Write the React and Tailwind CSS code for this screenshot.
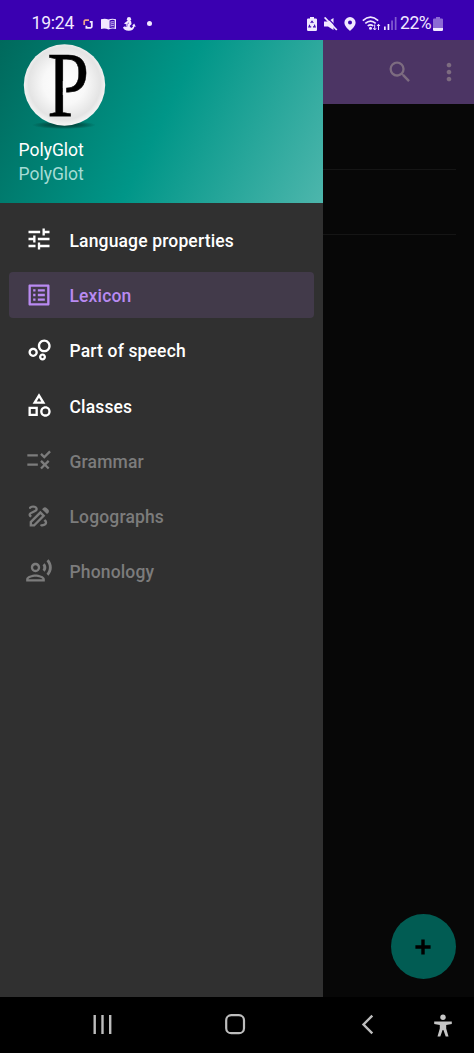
import {
  MdTune,
  MdOutlineListAlt,
  MdOutlineBubbleChart,
  MdOutlineCategory,
  MdRule,
  MdOutlineDraw,
  MdOutlineRecordVoiceOver,
  MdSearch,
  MdMoreVert,
} from "react-icons/md";

const MENU = [
  { label: "Language properties", icon: MdTune },
  { label: "Lexicon", icon: MdOutlineListAlt, active: true },
  { label: "Part of speech", icon: MdOutlineBubbleChart },
  { label: "Classes", icon: MdOutlineCategory },
  { label: "Grammar", icon: MdRule, disabled: true },
  { label: "Logographs", icon: MdOutlineDraw, disabled: true },
  { label: "Phonology", icon: MdOutlineRecordVoiceOver, disabled: true },
];

const StatusBar = () => (
  <header className="h-10 shrink-0 bg-[#3a00b1] text-[#f1e8ff] flex items-center justify-between pt-[7px] pl-[31.5px] pr-[31px]">
    <div className="flex items-center">
      <span className="text-[17.5px] leading-none w-[43px] whitespace-nowrap tracking-[-0.2px]">19:24</span>
      <svg className="ml-[8.5px]" width="10" height="10" viewBox="0 0 10 10" fill="none">
        <path d="M1.2 6V2.4Q1.2 1.2 2.4 1.2H6" stroke="#f0a58c" strokeWidth="1.7" />
        <path d="M6.8 2.8H8.8V7.6Q8.8 8.8 7.6 8.8H3.4V6.8" stroke="#f1e8ff" strokeWidth="1.8" />
      </svg>
      <svg className="ml-[8px]" width="15" height="12" viewBox="0 0 15 12">
        <path d="M0 1.2Q4 0 7.5 1.4Q11 0 15 1.2V11Q11 10 7.5 11.6Q4 10 0 11z" fill="#f1e8ff" />
        <path d="M8.6 2.4Q11 1.5 13.6 2.1V9.8Q11 9.3 8.6 10.1z" fill="#3a00b1" />
        <path d="M9.3 4.2q2-.6 3.6-.3M9.3 6.1q2-.6 3.6-.3M9.3 8q2-.6 3.6-.3" stroke="#f1e8ff" strokeWidth=".9" fill="none" />
      </svg>
      <svg className="ml-[7px]" width="13" height="14" viewBox="0 0 13 14" fill="#f1e8ff">
        <circle cx="6" cy="2.2" r="2.1" />
        <path d="M4.2 4L1 6.6l2.6.8-.6 1.4L0 10.3Q.8 13.6 5.6 13.7q5 .1 5.9-4.2l1.3.2-1.6-3.1-2.1 2.2 1 .3q-.5 1.6-2 1.8L6.6 9l2-2-.6-3z" />
        <path d="M2 9.6l2.6-.8M5.9 5.8L4.2 7.4" stroke="#3a00b1" strokeWidth=".7" />
      </svg>
      <span className="ml-[10.5px] size-[5px] rounded-full bg-[#f1e8ff]" />
    </div>

    <div className="flex items-center">
      <svg width="10" height="14" viewBox="0 0 10 14">
        <path d="M3 0h4v1.4h1.8Q10 1.4 10 2.6v10.2Q10 14 8.8 14H1.2Q0 14 0 12.8V2.6Q0 1.4 1.2 1.4H3z" fill="#f1e8ff" />
        <path d="M3.7 6L5 4.2 6.3 6M7.3 7.6l.9 2.3H6M4.2 9.9H1.9l.9-2.2" stroke="#3a00b1" strokeWidth="1.1" fill="none" />
      </svg>
      <svg className="ml-[7px]" width="14" height="14" viewBox="0 0 14 14">
        <path d="M0 4.6h4L9.5 1v12L4 9.4H0z" fill="#f1e8ff" />
        <path d="M1.8-1L14 11.5" stroke="#3a00b1" strokeWidth="1.2" />
        <path d="M.6.4L12.8 13" stroke="#f1e8ff" strokeWidth="1.7" />
      </svg>
      <svg className="ml-[6px]" width="12" height="14" viewBox="0 0 12 14">
        <path
          d="M6 0a5.6 5.6 0 0 0-5.6 5.6C.4 9 3.6 11.8 6 14c2.4-2.2 5.6-5 5.6-8.4A5.6 5.6 0 0 0 6 0zm0 3.6a2 2 0 1 1 0 4 2 2 0 0 1 0-4z"
          fill="#f1e8ff"
          fillRule="evenodd"
        />
      </svg>
      <svg className="ml-[6.5px]" width="19" height="15" viewBox="0 0 19 15" fill="none" stroke="#f1e8ff" strokeWidth="1.6">
        <path d="M.8 4.6Q8.5-2.2 16.2 4.6M3.3 7.4q5.2-4.7 10.4 0M5.7 10q2.8-2.4 5.6 0" />
        <circle cx="8.5" cy="12.2" r="1.5" fill="#f1e8ff" stroke="none" />
        <path d="M12.7 8.5v5.3M11.2 12.2l1.5 1.8 1.5-1.8M16.5 14V8.3M15 10l1.5-1.8L18 10" strokeWidth="1" />
      </svg>
      <svg className="ml-[3px]" width="13" height="13" viewBox="0 0 13 13" fill="#f1e8ff">
        <path d="M0 9.5h1.7V13H0zM3.6 7h1.7v6H3.6z" />
        <path d="M7.2 3.5h1.7V13H7.2zM10.8 0h1.7v13h-1.7z" opacity=".4" />
      </svg>
      <span className="ml-[3px] w-[32px] text-[17.5px] leading-none whitespace-nowrap tracking-[-0.4px]">22%</span>
      <svg className="ml-[1px]" width="10" height="14" viewBox="0 0 10 14" fill="#f1e8ff">
        <path d="M3 0h4v1.4h1.8Q10 1.4 10 2.6V11H0V2.6Q0 1.4 1.2 1.4H3z" opacity=".45" />
        <path d="M0 11h10v1.8Q10 14 8.8 14H1.2Q0 14 0 12.8z" />
      </svg>
    </div>
  </header>
);

const Logo = () => (
  <svg className="overflow-visible" width="90" height="88" viewBox="0 0 90 88">
    <defs>
      <radialGradient id="ball" cx="50%" cy="48%" r="52%">
        <stop offset="0" stopColor="#ffffff" />
        <stop offset=".5" stopColor="#f8f8f8" />
        <stop offset=".85" stopColor="#e4e4e4" />
        <stop offset="1" stopColor="#f6f6f6" />
      </radialGradient>
      <radialGradient id="shadow">
        <stop offset="0" stopColor="#00251f" stopOpacity=".8" />
        <stop offset=".6" stopColor="#00251f" stopOpacity=".4" />
        <stop offset="1" stopColor="#00251f" stopOpacity="0" />
      </radialGradient>
    </defs>
    <ellipse cx="45" cy="82" rx="32" ry="4" fill="url(#shadow)" />
    <circle cx="45.5" cy="42" r="40.7" fill="url(#ball)" />
    <text
      transform="translate(28.2 73.3) scale(.8 1)"
      fontSize="94"
      fontFamily="'Liberation Serif', serif"
      fill="#000"
      stroke="#000"
      strokeWidth=".6"
    >
      P
    </text>
    {/* gap between the stem and the bowl */}
    <path d="M43.8 38h3.4v14h-3.4z" fill="#fbfbfb" />
  </svg>
);

const MenuItem = ({ label, icon: Icon, active, disabled }) => {
  let color = "text-white";
  if (active) color = "text-[#b98af2]";
  if (disabled) color = "text-[#7c7c7c]";

  return (
    <li
      className={`h-[46px] rounded-[4px] flex items-center pl-[16px] ${color} ${
        active ? "bg-[#423a4a]" : ""
      }`}
    >
      <Icon className="size-[28px] -mt-[1.5px] shrink-0" />
      <span className="ml-[16.5px] pt-[3px] text-[17.5px] leading-none font-medium tracking-[0.15px] whitespace-nowrap">
        {label}
      </span>
    </li>
  );
};

const Drawer = () => (
  <aside className="w-[322.5px] shrink-0 bg-[#303030]">
    <div className="h-[163px] pt-[3px] pl-[18.5px] bg-[linear-gradient(116.7deg,#00695c_0%,#009688_50%,#4db6ac_100%)]">
      <Logo />
      <p className="mt-[7px] text-[17.5px] leading-[24px] text-white">PolyGlot</p>
      <p className="text-[17.5px] leading-[24px] text-[#a5dcd5]">PolyGlot</p>
    </div>
    <ul className="pt-[14px] px-[9px] flex flex-col gap-[9.25px]">
      {MENU.map((item) => (
        <MenuItem key={item.label} {...item} />
      ))}
    </ul>
  </aside>
);

const NavBar = () => (
  <nav className="h-[56px] shrink-0 bg-black">
    <svg width="474" height="56" viewBox="0 0 474 56" fill="none" stroke="#bdbdbd" strokeWidth="2.4">
      <path d="M94.7 18v19M102.5 18v19M110.2 18v19" />
      <rect x="226.2" y="18.2" width="17.8" height="18" rx="5" strokeWidth="2.2" />
      <path d="M372.3 18.7l-8.8 8.8 8.8 8.8" />
      <g fill="#c6c6c6" stroke="none">
        <circle cx="443" cy="20.3" r="2.7" />
        <path d="M434.2 24.5h17.6v2.6l-5.6 1v3.3l2.3 8.1h-2.8L443.4 33h-.8l-2.3 6.5h-2.8l2.3-8.1v-3.3l-5.6-1z" />
      </g>
    </svg>
  </nav>
);

export default function App() {
  return (
    <div className="w-[474px] h-[1053px] flex flex-col overflow-hidden bg-black font-['Roboto',sans-serif]">
      <StatusBar />
      <div className="flex-1 min-h-0 flex">
        <Drawer />
        <main className="flex-1 flex flex-col bg-[#070707]">
          <div className="h-16 bg-[#4c3564] text-[#7d6c80] flex items-center justify-end pr-[11.5px]">
            <MdSearch className="size-[28px]" />
            <MdMoreVert className="ml-[20.5px] size-[28px]" />
          </div>
          <div className="mr-[18px] h-[65.5px] border-b border-[#151515]" />
          <div className="mr-[18px] h-[65.5px] border-b border-[#151515]" />
          <button className="mt-auto ml-auto mr-[18.5px] mb-[18px] size-[65px] rounded-full bg-[#015c53] text-black flex items-center justify-center">
            <svg width="16" height="16" viewBox="0 0 16 16" stroke="currentColor" strokeWidth="3.4">
              <path d="M8 .4v15.2M.4 8h15.2" />
            </svg>
          </button>
        </main>
      </div>
      <NavBar />
    </div>
  );
}
